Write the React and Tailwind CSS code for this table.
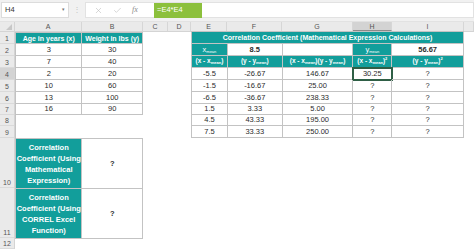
import { X, Check } from "lucide-react";

const TEAL = "bg-[#129e9b]";

const colLetters = [
  { l: "A", w: "w-[67px]" },
  { l: "B", w: "w-[61px]" },
  { l: "C", w: "w-[25px]" },
  { l: "D", w: "w-[23px]" },
  { l: "E", w: "w-[36px]" },
  { l: "F", w: "w-[55px]" },
  { l: "G", w: "w-[71px]" },
  { l: "H", w: "w-[39px]", active: true },
  { l: "I", w: "w-[72px]" },
  { l: "", w: "w-[10px]" },
];

const rowHeights = [
  "h-[12px]", "h-[12px]", "h-[12px]", "h-[12px]", "h-[12px]", "h-[12px]",
  "h-[11px]", "h-[11px]", "h-[12px]", "h-[50px]", "h-[50px]", "h-[11px]",
];

const ageWeight = [
  ["3", "30"],
  ["7", "40"],
  ["2", "20"],
  ["10", "60"],
  ["13", "100"],
  ["16", "90"],
];

const calc = [
  ["-5.5", "-26.67", "146.67", "30.25", "?"],
  ["-1.5", "-16.67", "25.00", "?", "?"],
  ["-6.5", "-36.67", "238.33", "?", "?"],
  ["1.5", "3.33", "5.00", "?", "?"],
  ["4.5", "43.33", "195.00", "?", "?"],
  ["7.5", "33.33", "250.00", "?", "?"],
];

const Sub = ({ children }) => (
  <span className="text-[4px] relative top-[1px]">{children}</span>
);

const Sup = ({ children }) => (
  <span className="text-[4px] relative -top-[3px]">{children}</span>
);

const Cell = ({ className = "", children }) => (
  <div className={`flex items-center justify-center border-r border-b border-[#c3c3c3] leading-none whitespace-nowrap ${className}`}>
    {children}
  </div>
);

const Lines = ({ lines }) => (
  <div className="flex flex-col items-center leading-[11px] text-[7.5px]">
    {lines.map((l) => (
      <span key={l}>{l}</span>
    ))}
  </div>
);

export default function App() {
  return (
    <div className="w-[474px] h-[249px] overflow-hidden bg-white text-[#2b2b2b] font-['Liberation_Sans',Arial,sans-serif]">
      {/* formula bar */}
      <div className="h-[22px] bg-[#f1f1f1] flex items-start pt-[2px] pl-[1px] border-b border-[#e2e2e2]">
        <div className="w-[68px] h-[16px] bg-white border border-[#dcdcdc] flex items-center justify-between px-[3px]">
          <span className="text-[7.5px] text-[#333]">H4</span>
          <span className="text-[5px] text-[#777]">▾</span>
        </div>
        <div className="w-[16px] h-[16px] flex items-center justify-center text-[8px] text-[#c4c4c4]">⋮</div>
        <div className="flex-1 h-[16px] bg-white border border-[#e2e2e2] flex items-center">
          <div className="w-[68px] flex items-center gap-[10px] pl-[8px] text-[#b9b9b9]">
            <X size={9} strokeWidth={1.5} />
            <Check size={9} strokeWidth={1.5} />
            <span className="italic text-[8px] text-[#8a8a8a] font-['Liberation_Serif',serif]">fx</span>
          </div>
          <div className="w-[48px] h-[15px] bg-[#8cc03c] flex items-center pl-[3px] text-[7.5px] text-white">
            =E4*E4
          </div>
        </div>
      </div>

      {/* column headers */}
      <div className="flex h-[10px] bg-[#eaeaea] border-b border-[#d4d4d4]">
        <div className="w-[15px] border-r border-[#d4d4d4] relative">
          <div className="absolute right-[2px] bottom-[1px] w-0 h-0 border-l-[6px] border-l-transparent border-b-[6px] border-b-[#c7c7c7]" />
        </div>
        {colLetters.map((c, i) => (
          <div
            key={i}
            className={`${c.w} flex items-center justify-center text-[7px] leading-none text-[#555] border-r border-[#d6d6d6] ${c.active ? "bg-[#d3d3d3] border-b border-b-[#8a8a8a]" : ""}`}
          >
            {c.l}
          </div>
        ))}
      </div>

      <div className="flex">
        {/* row headers */}
        <div className="w-[15px] bg-[#eaeaea] border-r border-[#d4d4d4] flex flex-col">
          {rowHeights.map((h, i) => (
            <div
              key={i}
              className={`${h} shrink-0 flex items-end justify-center pb-[1px] text-[7px] leading-none text-[#555] border-b border-[#dadada] ${i === 3 ? "bg-[#d3d3d3]" : ""}`}
            >
              {i + 1}
            </div>
          ))}
        </div>

        {/* sheet body */}
        <div className="flex flex-col text-[7.5px]">
          <div className="flex">
            {/* table 1 */}
            <div className="flex flex-col w-[128px] border-l border-t border-[#c3c3c3]">
              <div className="flex h-[11px] text-[7px]">
                <Cell className={`w-[67px] ${TEAL} text-white font-bold`}>Age in years (x)</Cell>
                <Cell className={`w-[61px] ${TEAL} text-white font-bold`}>Weight in lbs (y)</Cell>
              </div>
              {ageWeight.map((r, i) => (
                <div key={i} className={`flex ${i === 5 ? "h-[11px]" : "h-[12px]"}`}>
                  <Cell className="w-[67px]">{r[0]}</Cell>
                  <Cell className="w-[61px]">{r[1]}</Cell>
                </div>
              ))}
            </div>

            <div className="w-[48px]" />

            {/* table 2 */}
            <div className="flex flex-col w-[273px] border-l border-t border-[#c3c3c3] -mt-px">
              <Cell className={`h-[12px] ${TEAL} text-white font-bold text-[7px]`}>
                Correlation Coefficient (Mathematical Expression Calculations)
              </Cell>
              <div className="flex h-[12px]">
                <Cell className={`w-[36px] ${TEAL} text-white`}>
                  <span>x<Sub>mean</Sub></span>
                </Cell>
                <Cell className="w-[55px] font-bold">8.5</Cell>
                <Cell className="w-[71px]" />
                <Cell className={`w-[39px] ${TEAL} text-white`}>
                  <span>y<Sub>mean</Sub></span>
                </Cell>
                <Cell className="w-[72px] font-bold">56.67</Cell>
              </div>
              <div className={`flex h-[12px] ${TEAL} text-white font-bold text-[6.5px]`}>
                <Cell className="w-[36px]">
                  <span>(x - x<Sub>mean</Sub>)</span>
                </Cell>
                <Cell className="w-[55px]">
                  <span>(y - y<Sub>mean</Sub>)</span>
                </Cell>
                <Cell className="w-[71px]">
                  <span>(x - x<Sub>mean</Sub>)(y - y<Sub>mean</Sub>)</span>
                </Cell>
                <Cell className="w-[39px]">
                  <span>(x - x<Sub>mean</Sub>)<Sup>2</Sup></span>
                </Cell>
                <Cell className="w-[72px]">
                  <span>(y - y<Sub>mean</Sub>)<Sup>2</Sup></span>
                </Cell>
              </div>
              {calc.map((r, i) => (
                <div key={i} className={`flex ${i === 3 || i === 4 ? "h-[11px]" : "h-[12px]"}`}>
                  <Cell className="w-[36px]">{r[0]}</Cell>
                  <Cell className="w-[55px]">{r[1]}</Cell>
                  <Cell className="w-[71px]">{r[2]}</Cell>
                  <Cell className={`w-[39px] ${i === 0 ? "outline-2 outline-[#2f5f46] -outline-offset-1" : ""}`}>{r[3]}</Cell>
                  <Cell className="w-[72px]">{r[4]}</Cell>
                </div>
              ))}
            </div>
          </div>

          {/* table 3 */}
          <div className="flex flex-col w-[128px] border-l border-t border-[#c3c3c3]">
            <div className="flex h-[50px]">
              <Cell className={`w-[67px] ${TEAL} text-white font-bold`}>
                <Lines lines={["Correlation", "Coefficient (Using", "Mathematical", "Expression)"]} />
              </Cell>
              <Cell className="w-[61px] font-bold">?</Cell>
            </div>
            <div className="flex h-[50px]">
              <Cell className={`w-[67px] ${TEAL} text-white font-bold`}>
                <Lines lines={["Correlation", "Coefficient (Using", "CORREL Excel", "Function)"]} />
              </Cell>
              <Cell className="w-[61px] font-bold">?</Cell>
            </div>
          </div>
        </div>
      </div>
    </div>
  );
}
